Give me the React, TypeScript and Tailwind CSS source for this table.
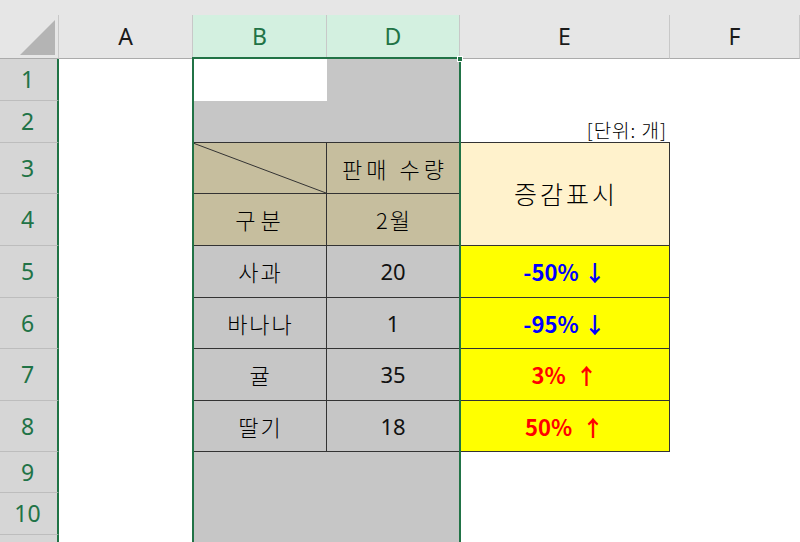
import React from 'react';

const GREEN = 'text-[#217346]';
const KR = "font-['Noto_Sans_CJK_KR','Noto_Sans',sans-serif]";

type Row = {
  n: number;
  b: string;
  d: string;
  e: string;
  up?: boolean;
};

const data: Row[] = [
  { n: 5, b: '사과', d: '20', e: '-50% ↓' },
  { n: 6, b: '바나나', d: '1', e: '-95% ↓' },
  { n: 7, b: '귤', d: '35', e: '3%  ↑', up: true },
  { n: 8, b: '딸기', d: '18', e: '50%  ↑', up: true },
];

function RowHead({ n }: { n?: number }) {
  return (
    <div
      className={`flex items-center justify-center border-b border-r-2 border-b-[#bdbdbd] border-r-[#217346] bg-[#d6d6d6] pr-[2px] text-[23px] ${GREEN} font-['Noto_Sans',sans-serif]`}
    >
      {n}
    </div>
  );
}

function ColHead({ label, active }: { label: string; active?: boolean }) {
  return (
    <div
      className={`flex items-center justify-center border-b border-r border-b-[#ababab] border-r-[#c8c8c8] text-[23px] font-['Noto_Sans',sans-serif] ${
        active ? 'bg-[#d3f0e0] text-[#217346]' : 'bg-[#e6e6e6] text-[#1a1a1a]'
      }`}
    >
      {label}
    </div>
  );
}

const cell = 'flex items-center justify-center border-r border-b border-[#333]';
const kr = 'text-[22px] font-light tracking-[2px] pl-[2px] text-black';
const num = "text-[22px] font-['Noto_Sans',sans-serif] text-[#111]";

export default function App() {
  return (
    <div className={`relative h-[542px] w-[800px] overflow-hidden bg-white ${KR}`}>
      <div className="grid h-full grid-cols-[59px_134px_134px_133px_210px_130px] grid-rows-[15px_44px_42px_42px_51px_52px_52px_51px_52px_51px_41px_42px_42px]">
        {/* ribbon strip */}
        <div className="col-span-6 bg-[#e6e6e6]" />

        {/* column headers */}
        <div className="relative border-b border-r border-b-[#ababab] border-r-[#c8c8c8] bg-[#e6e6e6]">
          <svg className="absolute left-[19px] top-[4px]" width="37" height="37" viewBox="0 0 37 37">
            <polygon points="36,1 36,36 1,36" fill="#b4b4b4" />
          </svg>
        </div>
        <ColHead label="A" />
        <ColHead label="B" active />
        <ColHead label="D" active />
        <ColHead label="E" />
        <ColHead label="F" />

        {/* row 1 */}
        <RowHead n={1} />
        <div />
        <div className="bg-white" />
        <div className="bg-[#c6c6c6]" />
        <div />
        <div />

        {/* row 2 */}
        <RowHead n={2} />
        <div />
        <div className="border-b border-[#333] bg-[#c6c6c6]" />
        <div className="border-b border-[#333] bg-[#c6c6c6]" />
        <div className="flex items-end justify-end border-b border-[#333] pb-[3px] pr-[3px] text-[19px] font-light leading-none tracking-[1px] text-black">
          [단위: 개]
        </div>
        <div />

        {/* row 3 */}
        <RowHead n={3} />
        <div />
        <div className="relative border-r border-b border-[#333] bg-[#c6be9e]">
          <svg className="absolute inset-0 h-full w-full" preserveAspectRatio="none" viewBox="0 0 100 100">
            <line x1="0" y1="0" x2="100" y2="100" stroke="#333" strokeWidth="1" vectorEffect="non-scaling-stroke" />
          </svg>
        </div>
        <div className={`${cell} ${kr} bg-[#c6be9e] tracking-[4px] pl-[4px]`}>판매 수량</div>
        <div className={`${cell} row-span-2 bg-[#fff2cc] pl-[3px] text-[25px] font-light tracking-[3px] text-black`}>
          증감표시
        </div>
        <div />

        {/* row 4 */}
        <RowHead n={4} />
        <div />
        <div className={`${cell} ${kr} bg-[#c6be9e] tracking-[5px]`}>구분</div>
        <div className={`${cell} ${kr} bg-[#c6be9e]`}>2월</div>
        <div />

        {/* rows 5-8 */}
        {data.map((r) => (
          <React.Fragment key={r.n}>
            <RowHead n={r.n} />
            <div />
            <div className={`${cell} ${kr} bg-[#c6c6c6]`}>{r.b}</div>
            <div className={`${cell} ${num} bg-[#c6c6c6]`}>{r.d}</div>
            <div
              className={`${cell} whitespace-pre bg-[#ffff00] text-[22px] font-bold ${
                r.up ? 'text-[#ff0000]' : 'text-[#0000ff]'
              }`}
            >
              {r.e}
            </div>
            <div />
          </React.Fragment>
        ))}

        {/* rows 9-11 (11 is only a sliver, no label visible) */}
        {[9, 10, 11].map((n) => (
          <React.Fragment key={n}>
            <RowHead n={n < 11 ? n : undefined} />
            <div />
            <div className="bg-[#c6c6c6]" />
            <div className="bg-[#c6c6c6]" />
            <div />
            <div />
          </React.Fragment>
        ))}
      </div>

      {/* selection outline */}
      <div className="pointer-events-none absolute left-[192px] top-[57px] h-[600px] w-[269px] border-2 border-[#217346]" />
      <div className="pointer-events-none absolute left-[457px] top-[56px] h-[6px] w-[6px] border border-white bg-[#217346]" />
    </div>
  );
}
